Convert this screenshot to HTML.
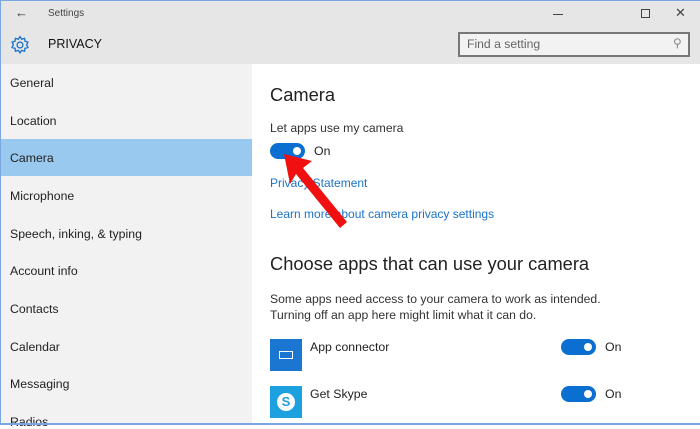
<!DOCTYPE html>
<html><head><style>
*{margin:0;padding:0;box-sizing:border-box}
body{width:700px;height:425px;overflow:hidden;font-family:"Liberation Sans",sans-serif;background:#fff;position:relative}
.t{position:absolute;white-space:nowrap}
.tog{position:absolute;width:35px;height:16px;border-radius:8px;background:#0a6fd0}
.tog:after{content:"";position:absolute;right:4px;top:4px;width:8px;height:8px;border-radius:50%;background:#fff}
.nav{position:absolute;left:10px;font-size:12.3px;color:#222}
.link{color:#1a73c9;font-size:12px}
</style></head><body>
<div style="position:absolute;left:0;top:0;width:700px;height:64px;background:#e6e6e6;border-top:1px solid #7aa7e0;border-left:1px solid #7aa7e0"></div>
<div class="t" style="left:15px;top:5px;font-size:13px;color:#333">&#8592;</div>
<div class="t" style="left:48px;top:8px;font-size:10px;color:#444">Settings</div>
<div style="position:absolute;left:553px;top:14px;width:10px;height:1px;background:#444"></div>
<div style="position:absolute;left:641px;top:9px;width:9px;height:9px;border:1px solid #444"></div>
<div class="t" style="left:675px;top:5px;font-size:13px;color:#444">&#10005;</div>
<svg style="position:absolute;left:10px;top:35px" width="20" height="20" viewBox="0 0 24 24" fill="none" stroke="#1a73c9" stroke-width="1.6"><circle cx="12" cy="12" r="3.5"/><path d="M12 2l2 3 3.5-1 .5 3.5 3.5 1-1.5 3.5 1.5 3-3.5 1-.5 3.5-3.5-1-2 3-2-3-3.5 1-.5-3.5-3.5-1 1.5-3.5-1.5-3 3.5-1 .5-3.5 3.5 1z"/></svg>
<div class="t" style="left:48px;top:37px;font-size:12.5px;color:#111">PRIVACY</div>
<div style="position:absolute;left:458px;top:32px;width:232px;height:25px;border:2px solid #777;background:#f2f2f2"></div>
<div class="t" style="left:467px;top:37px;font-size:12.2px;color:#666">Find a setting</div>
<div class="t" style="left:673px;top:36px;font-size:12px;color:#888">&#9906;</div>
<div style="position:absolute;left:0;top:64px;width:252px;height:361px;background:#f2f2f2;border-left:1px solid #7aa7e0"></div>
<div style="position:absolute;left:1px;top:139px;width:251px;height:37px;background:#99c9ef"></div>
<div class="nav" style="top:76px">General</div>
<div class="nav" style="top:114px">Location</div>
<div class="nav" style="top:151px">Camera</div>
<div class="nav" style="top:189px">Microphone</div>
<div class="nav" style="top:227px">Speech, inking, &amp; typing</div>
<div class="nav" style="top:264px">Account info</div>
<div class="nav" style="top:302px">Contacts</div>
<div class="nav" style="top:340px">Calendar</div>
<div class="nav" style="top:377px">Messaging</div>
<div class="nav" style="top:415px">Radios</div>
<div class="t" style="left:270px;top:84px;font-size:18.3px;color:#222">Camera</div>
<div class="t" style="left:270px;top:121px;font-size:12.2px;color:#333">Let apps use my camera</div>
<div class="tog" style="left:270px;top:143px"></div>
<div class="t" style="left:314px;top:144px;font-size:12.3px;color:#222">On</div>
<div class="t link" style="left:270px;top:176px">Privacy Statement</div>
<div class="t link" style="left:270px;top:207px">Learn more about camera privacy settings</div>
<div class="t" style="left:270px;top:253px;font-size:18.3px;color:#222">Choose apps that can use your camera</div>
<div class="t" style="left:270px;top:291px;font-size:12.2px;color:#333;line-height:16px">Some apps need access to your camera to work as intended.<br>Turning off an app here might limit what it can do.</div>
<div style="position:absolute;left:270px;top:339px;width:32px;height:32px;background:#1b76d2"></div>
<div style="position:absolute;left:279px;top:351px;width:14px;height:8px;border:1.5px solid #fff"></div>
<div class="t" style="left:310px;top:340px;font-size:12.3px;color:#222">App connector</div>
<div class="tog" style="left:561px;top:339px"></div>
<div class="t" style="left:605px;top:340px;font-size:12.3px;color:#222">On</div>
<div style="position:absolute;left:270px;top:386px;width:32px;height:32px;background:#1da0e0"></div>
<div style="position:absolute;left:277px;top:393px;width:18px;height:18px;border-radius:50%;background:#fff;color:#1da0e0;font:bold 13px 'Liberation Sans';text-align:center;line-height:18px">S</div>
<div class="t" style="left:310px;top:387px;font-size:12.3px;color:#222">Get Skype</div>
<div class="tog" style="left:561px;top:386px"></div>
<div class="t" style="left:605px;top:387px;font-size:12.3px;color:#222">On</div>
<div style="position:absolute;left:0;top:423px;width:700px;height:2px;background:#7aa7e0"></div>
<svg style="position:absolute;left:0;top:0" width="700" height="425"><polygon points="284,154 312,161 303,168 347,222 340,228 296,174 290,184" fill="#f01010"/></svg>
</body></html>
